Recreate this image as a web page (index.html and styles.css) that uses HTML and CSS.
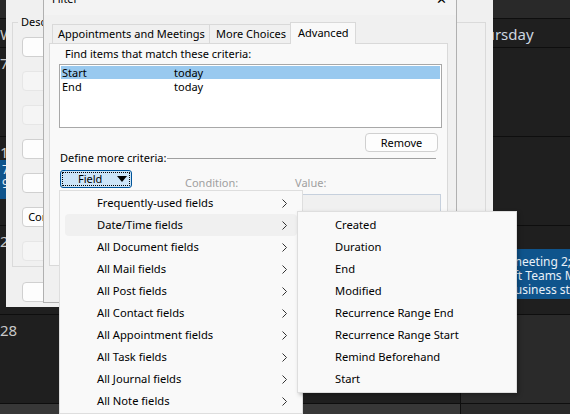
FILE: index.html
```html
<!DOCTYPE html>
<html lang="en">
<head>
    <meta charset="UTF-8">
    <title>Filter - Advanced</title>
    <link rel="stylesheet" href="styles.css">
</head>
<body>
    <!-- calendar behind the dialogs -->
    <div class="calendar">
        <div class="cal-top"></div>
        <div class="cal-row cal-head">
            <div class="cell">Wednesday</div>
            <div class="cell day-name">Thursday</div>
        </div>
        <div class="cal-row week">
            <div class="cell"><span class="num">7</span></div>
            <div class="cell"></div>
        </div>
        <div class="cal-row week">
            <div class="cell">
                <span class="num">14</span>
                <div class="event left-event">7:30<br>9:00</div>
            </div>
            <div class="cell"></div>
        </div>
        <div class="cal-row week">
            <div class="cell"><span class="num">21</span></div>
            <div class="cell">
                <div class="event right-event">
                    <div class="l1">Test meeting 2;</div>
                    <div class="l2">Microsoft Teams Meeting</div>
                    <div class="l3">Business start</div>
                </div>
            </div>
        </div>
        <div class="cal-row week">
            <div class="cell"><span class="num">28</span></div>
            <div class="cell other"></div>
        </div>
        <div class="cal-row week last">
            <div class="cell"></div>
            <div class="cell other"></div>
        </div>
    </div>

    <!-- appointment dialog (behind) -->
    <div class="window back-dialog">
        <div class="group">
            <span class="group-label">Description</span>
            <div class="side-btn">Save</div>
            <div class="side-btn off"></div>
            <div class="side-btn off"></div>
            <div class="side-btn">Find</div>
            <div class="side-btn">Fields</div>
            <div class="side-btn">Conditional Formatting...</div>
            <div class="side-btn off"></div>
        </div>
        <div class="side-btn bottom">Reset</div>
    </div>

    <!-- filter dialog -->
    <div class="window filter">
        <div class="titlebar">
            <span>Filter</span>
            <span class="close">✕</span>
        </div>
        <div class="tabs">
            <div class="tab">Appointments and Meetings</div>
            <div class="tab">More Choices</div>
            <div class="tab active">Advanced</div>
        </div>
        <div class="panel">
            <p class="label find">Find items that match these criteria:</p>
            <div class="listbox">
                <div class="list-row selected"><span class="col">Start</span><span>today</span></div>
                <div class="list-row"><span class="col">End</span><span>today</span></div>
            </div>
            <div class="remove-row">
                <button class="btn">Remove</button>
            </div>
            <div class="define">
                <span>Define more criteria:</span>
                <span class="rule"></span>
            </div>
            <div class="criteria">
                <button class="field-btn"><span>Field</span><span class="arrow"></span></button>
                <span class="dim cond">Condition:</span>
                <span class="dim">Value:</span>
            </div>
            <div class="value-row">
                <div class="value-box"></div>
            </div>
        </div>
    </div>

    <!-- field menu -->
    <ul class="menu main-menu">
        <li>Frequently-used fields<svg class="chev" width="5" height="9"><polyline points="0.5,0.5 4.5,4.5 0.5,8.5"/></svg></li>
        <li class="hot">Date/Time fields<svg class="chev" width="5" height="9"><polyline points="0.5,0.5 4.5,4.5 0.5,8.5"/></svg></li>
        <li>All Document fields<svg class="chev" width="5" height="9"><polyline points="0.5,0.5 4.5,4.5 0.5,8.5"/></svg></li>
        <li>All Mail fields<svg class="chev" width="5" height="9"><polyline points="0.5,0.5 4.5,4.5 0.5,8.5"/></svg></li>
        <li>All Post fields<svg class="chev" width="5" height="9"><polyline points="0.5,0.5 4.5,4.5 0.5,8.5"/></svg></li>
        <li>All Contact fields<svg class="chev" width="5" height="9"><polyline points="0.5,0.5 4.5,4.5 0.5,8.5"/></svg></li>
        <li>All Appointment fields<svg class="chev" width="5" height="9"><polyline points="0.5,0.5 4.5,4.5 0.5,8.5"/></svg></li>
        <li>All Task fields<svg class="chev" width="5" height="9"><polyline points="0.5,0.5 4.5,4.5 0.5,8.5"/></svg></li>
        <li>All Journal fields<svg class="chev" width="5" height="9"><polyline points="0.5,0.5 4.5,4.5 0.5,8.5"/></svg></li>
        <li>All Note fields<svg class="chev" width="5" height="9"><polyline points="0.5,0.5 4.5,4.5 0.5,8.5"/></svg></li>
    </ul>

    <ul class="menu sub-menu">
        <li>Created</li>
        <li>Duration</li>
        <li>End</li>
        <li>Modified</li>
        <li>Recurrence Range End</li>
        <li>Recurrence Range Start</li>
        <li>Remind Beforehand</li>
        <li>Start</li>
    </ul>
</body>
</html>
```

FILE: styles.css
```css
body {
    margin: 0;
    width: 570px;
    height: 414px;
    overflow: hidden;
    position: relative;
    background-color: #1f1f1f;
    font-family: 'Noto Sans', sans-serif;
    font-size: 11px;
    color: #000;
}

/* calendar */
.calendar {
    display: flex;
    flex-direction: column;
    height: 414px;
    overflow: hidden;
    color: #c8c8c8;
}
.cal-top {
    height: 18px;
    flex-shrink: 0;
    background-color: #292929;
    border-bottom: 1px solid #0e0e0e;
}
.cal-row {
    display: grid;
    grid-template-columns: 460px 110px;
    flex-shrink: 0;
    border-bottom: 1px solid #0e0e0e;
}
.cal-row .cell + .cell {
    border-left: 1px solid #0e0e0e;
}
.cal-head {
    height: 28px;
    font-size: 15px;
    line-height: 30px;
}
.day-name {
    padding-left: 7px;
    color: #cdd6e0;
}
.week {
    height: 88px;
}
.num {
    display: block;
    font-size: 15px;
    margin-top: 5px;
}
.other {
    background-color: #2a2a2a;
}
.last {
    border-bottom: none;
}
.last .cell:first-child {
    background-color: #383838;
}
.event {
    background-color: #0f548c;
    color: #e8f0f8;
    font-size: 12px;
    line-height: 14px;
    padding: 3px 2px;
    white-space: nowrap;
    overflow: hidden;
}
.left-event {
    margin-top: -2px;
    height: 33px;
    width: 120px;
}
.right-event {
    margin-top: 23px;
    margin-left: 52px;
    height: 50px;
    box-sizing: border-box;
    padding: 6px 0 2px 0;
}
.l1 {
    margin-left: -28px;
}
.l2 {
    margin-left: -44px;
}
.l3 {
    margin-left: -6px;
}

/* windows */
.window {
    position: absolute;
    background-color: #f0f0f0;
    box-sizing: border-box;
}
.back-dialog {
    left: 6px;
    top: 0;
    width: 487px;
    height: 307px;
    padding: 22px 7px 0 6px;
}
.group {
    position: relative;
    border: 1px solid #dadada;
    height: 245px;
    box-sizing: border-box;
    padding: 14px 0 0 9px;
    display: flex;
    flex-direction: column;
    gap: 14px;
}
.group-label {
    position: absolute;
    left: 5px;
    top: -9px;
    padding: 0 3px;
    background-color: #f0f0f0;
    font-size: 11px;
}
.side-btn {
    width: 141px;
    height: 20px;
    box-sizing: border-box;
    background-color: #fdfdfd;
    border: 1px solid #d0d0d0;
    border-radius: 4px;
    font-size: 11px;
    line-height: 18px;
    text-align: center;
    white-space: nowrap;
    color: #000;
}
.side-btn.off {
    background-color: #f5f5f5;
    border-color: #e6e6e6;
}
.side-btn.bottom {
    margin: 15px 0 0 10px;
}

.filter {
    left: 43px;
    top: -18px;
    width: 414px;
    height: 321px;
    border: 1px solid #b0b0b0;
    padding: 0 8px 0 5px;
}
.titlebar {
    height: 32px;
    line-height: 32px;
    font-size: 11px;
    display: flex;
    justify-content: space-between;
    margin-bottom: 7px;
    background-color: #f3f3f3;
    margin-left: -5px;
    margin-right: -8px;
    padding: 0 9px 0 8px;
}
.close {
    font-size: 13px;
}
.tabs {
    display: flex;
    align-items: flex-end;
    height: 21px;
    padding-left: 3px;
    position: relative;
    z-index: 1;
}
.tab {
    height: 19px;
    box-sizing: border-box;
    border: 1px solid #d9d9d9;
    border-bottom: none;
    background-color: #f0f0f0;
    font-size: 11px;
    line-height: 18px;
    padding: 0 5px;
    margin-right: -1px;
    white-space: nowrap;
}
.tab:nth-child(1) { width: 158px; }
.tab:nth-child(2) { width: 82px; padding-left: 6px; }
.tab.active {
    height: 22px;
    width: 66px;
    background-color: #f9f9f9;
    margin-bottom: -1px;
    padding-left: 7px;
    line-height: 19px;
}
.panel {
    height: 223px;
    box-sizing: border-box;
    border: 1px solid #d9d9d9;
    background-color: #f9f9f9;
    padding: 0 5px 0 9px;
}
.label {
    margin: 0;
}
.find {
    font-size: 11px;
    line-height: 16px;
    padding: 2px 0 0 6px;
    height: 20px;
    box-sizing: border-box;
}
.listbox {
    height: 64px;
    box-sizing: border-box;
    border: 1px solid #a8a8a8;
    background-color: #fff;
    padding: 1px;
}
.list-row {
    height: 13px;
    line-height: 13px;
    font-size: 11px;
    padding-left: 1px;
    margin-bottom: 1px;
}
.list-row.selected {
    background-color: #99c9ef;
}
.col {
    display: inline-block;
    width: 112px;
}
.remove-row {
    display: flex;
    justify-content: flex-end;
    padding: 5px 4px 0 0;
}
.btn {
    width: 73px;
    height: 19px;
    font-family: inherit;
    font-size: 11px;
    padding: 0;
    background-color: #fdfdfd;
    border: 1px solid #d0d0d0;
    border-radius: 4px;
    line-height: 17px;
    color: #000;
}
.define {
    display: flex;
    align-items: center;
    gap: 1px;
    font-size: 11px;
    margin-top: -2px;
    padding: 0 6px 0 1px;
    height: 14px;
}
.rule {
    flex: 1;
    border-top: 1px solid #a0a0a0;
    margin-top: 2px;
}
.criteria {
    display: flex;
    align-items: flex-start;
    margin-top: 6px;
    padding-left: 1px;
    font-size: 11px;
}
.field-btn {
    width: 72px;
    height: 18px;
    font-family: inherit;
    font-size: 11px;
    color: #000;
    background-color: #cce4f7;
    border: 1px solid #005499;
    border-radius: 3px;
    padding: 0 4px 0 17px;
    outline: 1px dotted #000;
    outline-offset: -3px;
    display: flex;
    align-items: center;
    justify-content: space-between;
    line-height: 14px;
}
.arrow {
    width: 0;
    height: 0;
    border-left: 5px solid transparent;
    border-right: 5px solid transparent;
    border-top: 6px solid #000;
}
.dim {
    color: #a0a0a0;
    line-height: 14px;
    padding-top: 6px;
}
.cond {
    margin-left: 53px;
    width: 110px;
}
.value-row {
    display: flex;
    justify-content: flex-end;
    padding-right: 1px;
    margin-top: 4px;
}
.value-box {
    width: 146px;
    height: 21px;
    box-sizing: border-box;
    border: 1px solid #c6d0dd;
    background-color: #f0f0f0;
}

/* context menus */
.menu {
    position: absolute;
    margin: 0;
    list-style: none;
    background-color: #f9f9f9;
    border: 1px solid #dedede;
    box-sizing: border-box;
    font-size: 11.2px;
}
.menu li {
    height: 22px;
    line-height: 22px;
    padding-left: 32px;
    position: relative;
    border-radius: 4px;
    margin: 0 5px;
    white-space: nowrap;
}
.main-menu {
    left: 59px;
    top: 190px;
    width: 244px;
    height: 224px;
    padding: 1px 0;
    overflow: hidden;
}
.main-menu li.hot {
    background-color: #f0f0f0;
}
.chev {
    position: absolute;
    right: 10px;
    top: 7px;
    fill: none;
    stroke: #333;
    stroke-width: 1;
}
.sub-menu {
    left: 297px;
    top: 211px;
    width: 220px;
    height: 182px;
    padding: 2px 0;
    box-shadow: 2px 2px 4px rgba(0, 0, 0, 0.25);
}
```
